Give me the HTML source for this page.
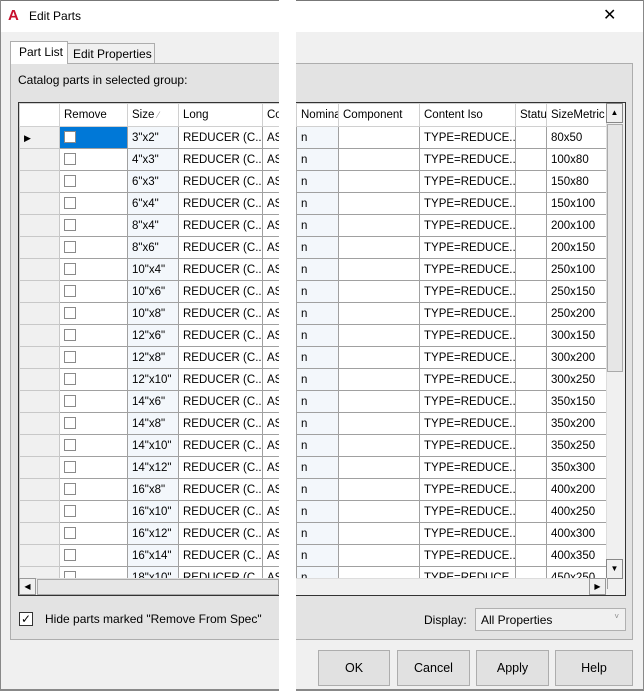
<!DOCTYPE html>
<html><head><meta charset="utf-8"><style>
*{box-sizing:border-box;margin:0;padding:0}
body{width:644px;height:691px;overflow:hidden;background:#f0f0f0;font-family:"Liberation Sans",sans-serif;font-size:12px;color:#000;position:relative}
.a{position:absolute}
.title{left:0;top:0;width:644px;height:32px;background:#fff;border-top:1px solid #777}
.panel{left:10px;top:63px;width:623px;height:577px;background:#e3e3e3;border:1px solid #adadad}
.grid{left:18px;top:102px;width:608px;height:494px;border:1px solid #333;background:#f0f0f0;overflow:hidden}
table{border-collapse:collapse;table-layout:fixed;position:absolute;left:0;top:0;width:588px}
td{height:22px;border:1px solid #a0a0a0;padding:0 4px;white-space:nowrap;overflow:hidden;background:#fff;font-size:11.5px}
tr.h td{background:#fff;height:23px;border-color:#d0d0d0}
td.rh{background:#f0f0f0;border-color:#c8c8c8}
td.lb{background:#f3f7fb}
.cb{display:inline-block;width:12px;height:12px;border:1px solid #8a8a8a;background:#fff;vertical-align:middle}
.btn{top:650px;height:36px;background:#e1e1e1;border:1px solid #adadad;text-align:center;line-height:34px;font-size:12.5px}
</style></head><body>
<div class="a title"></div>
<div class="a" style="left:8px;top:7px;color:#c8102e;font-weight:bold;font-size:15px">A</div>
<div class="a" style="left:29px;top:9px;font-size:12px">Edit Parts</div>
<div class="a" style="left:603px;top:5px;font-size:16px">✕</div>
<div class="a panel"></div>
<div class="a" style="left:10px;top:41px;width:58px;height:23px;background:#fff;border:1px solid #adadad;border-bottom:none;padding:3px 0 0 8px">Part List</div>
<div class="a" style="left:67px;top:43px;width:88px;height:20px;background:#f0f0f0;border:1px solid #adadad;border-bottom:none;padding:3px 0 0 5px">Edit Properties</div>
<div class="a" style="left:18px;top:73px">Catalog parts in selected group:</div>
<div class="a grid">
<table>
<colgroup><col style="width:40px"><col style="width:68px"><col style="width:51px"><col style="width:84px"><col style="width:34px"><col style="width:42px"><col style="width:81px"><col style="width:96px"><col style="width:31px"><col style="width:61px"></colgroup>
<tr class="h"><td class="rh"></td><td>Remove</td><td>Size <span style="color:#999;font-size:9px">⁄</span></td><td>Long</td><td>Co</td><td>Nomina</td><td>Component</td><td>Content Iso</td><td>Statu</td><td>SizeMetric</td></tr>
<tr><td class="rh"><span style="font-size:9px">▶</span></td><td style="background:#0078d7"><span class="cb"></span></td><td class="lb">3"x2"</td><td>REDUCER (C...</td><td>AS</td><td class="lb">n</td><td></td><td>TYPE=REDUCE...</td><td></td><td>80x50</td></tr>
<tr><td class="rh"></td><td><span class="cb"></span></td><td class="lb">4"x3"</td><td>REDUCER (C...</td><td>AS</td><td class="lb">n</td><td></td><td>TYPE=REDUCE...</td><td></td><td>100x80</td></tr>
<tr><td class="rh"></td><td><span class="cb"></span></td><td class="lb">6"x3"</td><td>REDUCER (C...</td><td>AS</td><td class="lb">n</td><td></td><td>TYPE=REDUCE...</td><td></td><td>150x80</td></tr>
<tr><td class="rh"></td><td><span class="cb"></span></td><td class="lb">6"x4"</td><td>REDUCER (C...</td><td>AS</td><td class="lb">n</td><td></td><td>TYPE=REDUCE...</td><td></td><td>150x100</td></tr>
<tr><td class="rh"></td><td><span class="cb"></span></td><td class="lb">8"x4"</td><td>REDUCER (C...</td><td>AS</td><td class="lb">n</td><td></td><td>TYPE=REDUCE...</td><td></td><td>200x100</td></tr>
<tr><td class="rh"></td><td><span class="cb"></span></td><td class="lb">8"x6"</td><td>REDUCER (C...</td><td>AS</td><td class="lb">n</td><td></td><td>TYPE=REDUCE...</td><td></td><td>200x150</td></tr>
<tr><td class="rh"></td><td><span class="cb"></span></td><td class="lb">10"x4"</td><td>REDUCER (C...</td><td>AS</td><td class="lb">n</td><td></td><td>TYPE=REDUCE...</td><td></td><td>250x100</td></tr>
<tr><td class="rh"></td><td><span class="cb"></span></td><td class="lb">10"x6"</td><td>REDUCER (C...</td><td>AS</td><td class="lb">n</td><td></td><td>TYPE=REDUCE...</td><td></td><td>250x150</td></tr>
<tr><td class="rh"></td><td><span class="cb"></span></td><td class="lb">10"x8"</td><td>REDUCER (C...</td><td>AS</td><td class="lb">n</td><td></td><td>TYPE=REDUCE...</td><td></td><td>250x200</td></tr>
<tr><td class="rh"></td><td><span class="cb"></span></td><td class="lb">12"x6"</td><td>REDUCER (C...</td><td>AS</td><td class="lb">n</td><td></td><td>TYPE=REDUCE...</td><td></td><td>300x150</td></tr>
<tr><td class="rh"></td><td><span class="cb"></span></td><td class="lb">12"x8"</td><td>REDUCER (C...</td><td>AS</td><td class="lb">n</td><td></td><td>TYPE=REDUCE...</td><td></td><td>300x200</td></tr>
<tr><td class="rh"></td><td><span class="cb"></span></td><td class="lb">12"x10"</td><td>REDUCER (C...</td><td>AS</td><td class="lb">n</td><td></td><td>TYPE=REDUCE...</td><td></td><td>300x250</td></tr>
<tr><td class="rh"></td><td><span class="cb"></span></td><td class="lb">14"x6"</td><td>REDUCER (C...</td><td>AS</td><td class="lb">n</td><td></td><td>TYPE=REDUCE...</td><td></td><td>350x150</td></tr>
<tr><td class="rh"></td><td><span class="cb"></span></td><td class="lb">14"x8"</td><td>REDUCER (C...</td><td>AS</td><td class="lb">n</td><td></td><td>TYPE=REDUCE...</td><td></td><td>350x200</td></tr>
<tr><td class="rh"></td><td><span class="cb"></span></td><td class="lb">14"x10"</td><td>REDUCER (C...</td><td>AS</td><td class="lb">n</td><td></td><td>TYPE=REDUCE...</td><td></td><td>350x250</td></tr>
<tr><td class="rh"></td><td><span class="cb"></span></td><td class="lb">14"x12"</td><td>REDUCER (C...</td><td>AS</td><td class="lb">n</td><td></td><td>TYPE=REDUCE...</td><td></td><td>350x300</td></tr>
<tr><td class="rh"></td><td><span class="cb"></span></td><td class="lb">16"x8"</td><td>REDUCER (C...</td><td>AS</td><td class="lb">n</td><td></td><td>TYPE=REDUCE...</td><td></td><td>400x200</td></tr>
<tr><td class="rh"></td><td><span class="cb"></span></td><td class="lb">16"x10"</td><td>REDUCER (C...</td><td>AS</td><td class="lb">n</td><td></td><td>TYPE=REDUCE...</td><td></td><td>400x250</td></tr>
<tr><td class="rh"></td><td><span class="cb"></span></td><td class="lb">16"x12"</td><td>REDUCER (C...</td><td>AS</td><td class="lb">n</td><td></td><td>TYPE=REDUCE...</td><td></td><td>400x300</td></tr>
<tr><td class="rh"></td><td><span class="cb"></span></td><td class="lb">16"x14"</td><td>REDUCER (C...</td><td>AS</td><td class="lb">n</td><td></td><td>TYPE=REDUCE...</td><td></td><td>400x350</td></tr>
<tr><td class="rh"></td><td><span class="cb"></span></td><td class="lb">18"x10"</td><td>REDUCER (C...</td><td>AS</td><td class="lb">n</td><td></td><td>TYPE=REDUCE...</td><td></td><td>450x250</td></tr>
</table>
<div class="a" style="left:587px;top:0;width:17px;height:476px;background:#f0f0f0;border-left:1px solid #ddd"></div>
<div class="a" style="left:587px;top:0;width:17px;height:20px;background:#f0f0f0;border:1px solid #888;text-align:center;font-size:8px;line-height:18px">▲</div>
<div class="a" style="left:588px;top:21px;width:16px;height:248px;background:#e6e6e6;border:1px solid #aaa"></div>
<div class="a" style="left:587px;top:456px;width:17px;height:20px;background:#f0f0f0;border:1px solid #888;text-align:center;font-size:8px;line-height:18px">▼</div>
<div class="a" style="left:0;top:475px;width:588px;height:17px;background:#f0f0f0;border-top:1px solid #ddd"></div>
<div class="a" style="left:0;top:475px;width:17px;height:17px;background:#f0f0f0;border:1px solid #999;text-align:center;font-size:8px;line-height:15px">◀</div>
<div class="a" style="left:18px;top:476px;width:242px;height:16px;background:#e6e6e6;border:1px solid #aaa"></div>
<div class="a" style="left:570px;top:475px;width:17px;height:17px;background:#f0f0f0;border:1px solid #999;text-align:center;font-size:8px;line-height:15px">▶</div>
</div>
<div class="a" style="left:19px;top:612px;width:14px;height:14px;border:1px solid #333;background:#fff;font-size:12px;line-height:12px;text-align:center">✓</div>
<div class="a" style="left:45px;top:612px">Hide parts marked "Remove From Spec"</div>
<div class="a" style="left:424px;top:613px">Display:</div>
<div class="a" style="left:475px;top:608px;width:151px;height:23px;background:#f0f0f0;border:1px solid #b0b0b0;padding:4px 0 0 5px">All Properties<span style="position:absolute;right:6px;top:3px;font-size:8px;color:#888">˅</span></div>
<div class="a btn" style="left:318px;width:72px">OK</div>
<div class="a btn" style="left:397px;width:73px">Cancel</div>
<div class="a btn" style="left:476px;width:73px">Apply</div>
<div class="a btn" style="left:555px;width:78px">Help</div>
<div class="a" style="left:0;top:689px;width:644px;height:2px;background:#888"></div>
<div class="a" style="left:0;top:0;width:1px;height:691px;background:#888"></div>
<div class="a" style="left:643px;top:0;width:1px;height:691px;background:#888"></div>
<div class="a" style="left:279px;top:0;width:17px;height:691px;background:#fff"></div>
</body></html>
